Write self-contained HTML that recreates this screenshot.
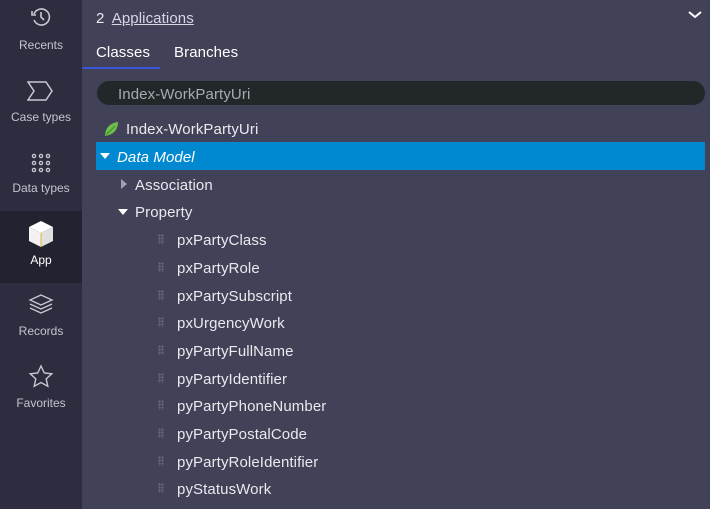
<!DOCTYPE html>
<html><head><style>
*{margin:0;padding:0;box-sizing:border-box}
body{width:710px;height:509px;overflow:hidden;background:#414157;font-family:"Liberation Sans",sans-serif;position:relative;color:#e9e9ef}
.side{position:absolute;left:0;top:0;width:82px;height:509px;background:#2e2d3f}
.si{position:absolute;left:0;width:82px;text-align:center;font-size:12px;color:#c4c4cf}
.si svg{position:absolute;left:29px}
.si span{position:absolute;left:0;width:82px}
.app{background:#232230;color:#fff}
.t{position:absolute;font-size:15px;white-space:nowrap;letter-spacing:0.1px}
.grip{position:absolute;left:158px;width:6px;height:10px;background-image:radial-gradient(circle,#6b6b80 1px,transparent 1.2px);background-size:3px 3px}
</style></head><body>
<div class="side">
 <div class="si" style="top:0;height:70px"><svg width="24" height="24" viewBox="0 0 24 24" style="top:5px" fill="none" stroke="#c8c8d2" stroke-width="1.6"><path d="M5 9a8 8 0 1 1 0 6"/><path d="M3 6v4h4"/><path d="M12 7v5l3 3"/></svg><span style="top:38px">Recents</span></div>
 <div class="si" style="top:72px;height:70px"><svg width="26" height="22" viewBox="0 0 26 22" style="top:8px;left:27px" fill="none" stroke="#c8c8d2" stroke-width="1.5"><path d="M1 2h18l6 9-6 9H1l6-9z"/></svg><span style="top:38px">Case types</span></div>
 <div class="si" style="top:144px;height:70px"><svg width="24" height="24" viewBox="0 0 24 24" style="top:7px" fill="none" stroke="#c8c8d2" stroke-width="1.3"><circle cx="5" cy="5" r="1.6"/><circle cx="12" cy="5" r="1.6"/><circle cx="19" cy="5" r="1.6"/><circle cx="5" cy="12" r="1.6"/><circle cx="12" cy="12" r="1.6"/><circle cx="19" cy="12" r="1.6"/><circle cx="5" cy="19" r="1.6"/><circle cx="12" cy="19" r="1.6"/><circle cx="19" cy="19" r="1.6"/></svg><span style="top:37px">Data types</span></div>
 <div class="si app" style="top:211px;height:72px"><svg width="26" height="28" viewBox="0 0 26 28" style="top:9px;left:28px"><path d="M13 1l12 6-12 6L1 7z" fill="#fff"/><path d="M1 7l12 6v14L1 21z" fill="#f2f2f2"/><path d="M25 7l-12 6v14l12-6z" fill="#e0e0e0"/><path d="M13 13v14" stroke="#e8b040" stroke-width="1"/></svg><span style="top:42px">App</span></div>
 <div class="si" style="top:286px;height:70px"><svg width="26" height="24" viewBox="0 0 26 24" style="top:7px;left:28px" fill="none" stroke="#c8c8d2" stroke-width="1.3"><path d="M13 2l11 5-11 5L2 7z"/><path d="M2 11l11 5 11-5"/><path d="M2 15l11 5 11-5"/></svg><span style="top:38px">Records</span></div>
 <div class="si" style="top:358px;height:70px"><svg width="26" height="26" viewBox="0 0 26 26" style="top:6px;left:28px" fill="none" stroke="#c8c8d2" stroke-width="1.4"><path d="M13 2l3.3 7 7.5.8-5.6 5.1 1.6 7.4L13 18.5l-6.8 3.8 1.6-7.4L2.2 9.8l7.5-.8z"/></svg><span style="top:38px">Favorites</span></div>
</div>
<div class="t" style="left:96px;top:10px">2 <span style="text-decoration:underline;color:#d8d8e4;margin-left:3px">Applications</span></div>
<svg width="16" height="10" style="position:absolute;left:687px;top:10px" fill="none" stroke="#fff" stroke-width="2"><path d="M2 2l6 5 6-5"/></svg>
<div class="t" style="left:96px;top:44px;color:#fff">Classes</div>
<div class="t" style="left:174px;top:44px;color:#fff">Branches</div>
<div style="position:absolute;left:82px;top:67px;width:78px;height:2px;background:#3b55d8"></div>
<div style="position:absolute;left:97px;top:81px;width:608px;height:24px;border-radius:12px;background:#22282a"></div>
<div class="t" style="left:118px;top:86px;color:#a9abb0">Index-WorkPartyUri</div>
<svg width="16" height="16" style="position:absolute;left:103px;top:121px"><path d="M2 15C2 7 7 2 15 1 15 9 10 14 2 15z" fill="#6cbf4a"/><path d="M3 14L12 5" stroke="#3f8a2e" stroke-width="1"/></svg>
<div class="t" style="left:126px;top:121px">Index-WorkPartyUri</div>
<div style="position:absolute;left:96px;top:142px;width:609px;height:28px;background:#0088d1"></div>
<svg width="10" height="8" style="position:absolute;left:100px;top:152px"><path d="M0 1h10L5 7z" fill="#fff"/></svg>
<div class="t" style="left:117px;top:149px;font-style:italic;color:#fff">Data Model</div>
<svg width="8" height="10" style="position:absolute;left:120px;top:179px"><path d="M1 0v10l6-5z" fill="#a0a0b0"/></svg>
<div class="t" style="left:135px;top:177px">Association</div>
<svg width="10" height="8" style="position:absolute;left:118px;top:208px"><path d="M0 1h10L5 7z" fill="#fff"/></svg>
<div class="t" style="left:135px;top:204px">Property</div>
<div class="grip" style="top:234px"></div><div class="t" style="left:177px;top:232px">pxPartyClass</div>
<div class="grip" style="top:262px"></div><div class="t" style="left:177px;top:260px">pxPartyRole</div>
<div class="grip" style="top:290px"></div><div class="t" style="left:177px;top:288px">pxPartySubscript</div>
<div class="grip" style="top:317px"></div><div class="t" style="left:177px;top:315px">pxUrgencyWork</div>
<div class="grip" style="top:345px"></div><div class="t" style="left:177px;top:343px">pyPartyFullName</div>
<div class="grip" style="top:373px"></div><div class="t" style="left:177px;top:371px">pyPartyIdentifier</div>
<div class="grip" style="top:400px"></div><div class="t" style="left:177px;top:398px">pyPartyPhoneNumber</div>
<div class="grip" style="top:428px"></div><div class="t" style="left:177px;top:426px">pyPartyPostalCode</div>
<div class="grip" style="top:456px"></div><div class="t" style="left:177px;top:454px">pyPartyRoleIdentifier</div>
<div class="grip" style="top:483px"></div><div class="t" style="left:177px;top:481px">pyStatusWork</div>
</body></html>
